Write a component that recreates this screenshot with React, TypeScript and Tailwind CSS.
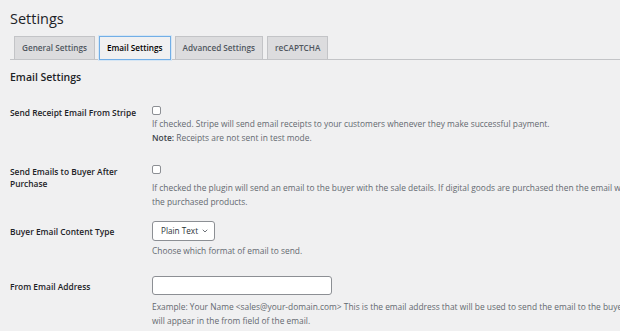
import { ChevronDown } from "lucide-react";

const font = { fontFamily: '"Open Sans", "Noto Sans", sans-serif' };

function Tab({ label, active }: { label: string; active?: boolean }) {
  return (
    <div
      className={
        active
          ? "mb-[-1px] h-[24px] px-[7px] flex items-center border border-[#72aee6] bg-[#f0f0f1] text-[8.2px] font-semibold text-black shadow-[0_0_0_1px_#d5e6f5]"
          : "h-[23px] px-[7px] flex items-center border border-[#c3c4c7] border-b-0 bg-[#dcdcde] text-[8.2px] font-semibold text-[#50575e]"
      }
    >
      {label}
    </div>
  );
}

function Row({
  label,
  children,
  labelClass = "",
}: {
  label: React.ReactNode;
  children: React.ReactNode;
  labelClass?: string;
}) {
  return (
    <div className="grid grid-cols-[142px_1fr]">
      <div className={"text-[8.4px] font-semibold leading-[12px] text-[#1d2327] " + labelClass}>
        {label}
      </div>
      <div>{children}</div>
    </div>
  );
}

function Desc({ children }: { children: React.ReactNode }) {
  return (
    <p className="text-[8.4px] leading-[14px] text-[#646970] whitespace-nowrap">{children}</p>
  );
}

function Checkbox() {
  return <div className="h-[9px] w-[9px] rounded-[2px] border border-[#8c8f94] bg-white" />;
}

export default function App() {
  return (
    <div style={font} className="h-[331px] w-[620px] overflow-hidden bg-[#f0f0f1] pl-[10px]">
      <h1 className="pt-[9px] text-[14.5px] leading-[20px] text-[#1d2327]">Settings</h1>
      <div className="mt-[7px] flex items-end gap-[4px] border-b border-[#c3c4c7] pl-[4px]">
        <Tab label="General Settings" />
        <Tab label="Email Settings" active />
        <Tab label="Advanced Settings" />
        <Tab label="reCAPTCHA" />
      </div>
      <h2 className="mt-[10px] text-[10.5px] font-semibold leading-[14px] text-[#1d2327]">
        Email Settings
      </h2>

      <div className="mt-[22px]">
        <Row label="Send Receipt Email From Stripe" labelClass="pt-[1px]">
          <Checkbox />
          <div className="mt-[2px]">
            <Desc>
              If checked. Stripe will send email receipts to your customers whenever they make
              successful payment.
            </Desc>
            <Desc>
              <span className="font-semibold text-[#3c434a]">Note:</span> Receipts are not sent in
              test mode.
            </Desc>
          </div>
        </Row>
      </div>

      <div className="mt-[20px]">
        <Row label={<>Send Emails to Buyer After<br />Purchase</>} labelClass="pt-[1px]">
          <Checkbox />
          <div className="mt-[7px]">
            <Desc>
              If checked the plugin will send an email to the buyer with the sale details. If
              digital goods are purchased then the email will contain the download links for
            </Desc>
            <Desc>the purchased products.</Desc>
          </div>
        </Row>
      </div>

      <div className="mt-[12px]">
        <Row label="Buyer Email Content Type" labelClass="pt-[5px]">
          <div className="flex h-[20px] w-[63px] items-center justify-between rounded-[3px] border border-[#8c8f94] bg-white pl-[8px] pr-[5px] text-[8.2px] text-[#2c3338]">
            <span>Plain Text</span>
            <ChevronDown className="h-[8px] w-[8px] text-[#50575e]" strokeWidth={2.5} />
          </div>
          <div className="mt-[3px]">
            <Desc>Choose which format of email to send.</Desc>
          </div>
        </Row>
      </div>

      <div className="mt-[18px]">
        <Row label="From Email Address" labelClass="pt-[5px]">
          <div className="h-[19px] w-[180px] rounded-[3px] border border-[#8c8f94] bg-white" />
          <div className="mt-[5px]">
            <Desc>
              Example: Your Name &lt;sales@your-domain.com&gt; This is the email address that will
              be used to send the email to the buyer. This name and email address
            </Desc>
            <Desc>will appear in the from field of the email.</Desc>
          </div>
        </Row>
      </div>
    </div>
  );
}
